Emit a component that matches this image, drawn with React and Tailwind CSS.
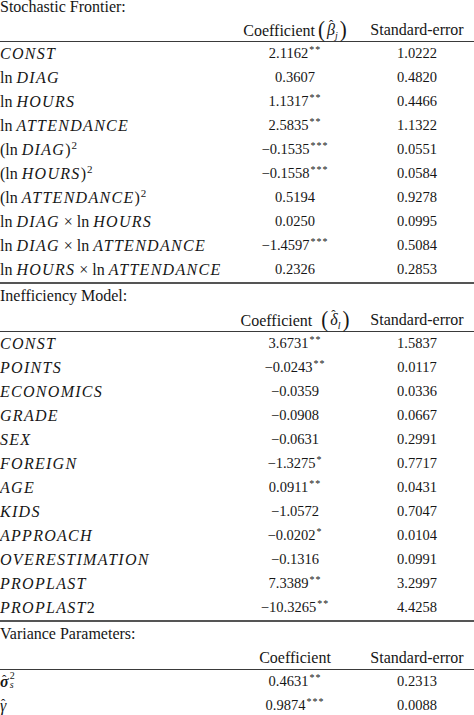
import React from "react";

const serif = { fontFamily: '"Liberation Serif", "Times New Roman", serif' };

// math italic caps, spaced like TeX
const M = ({ children }) => (
  <i className="tracking-[0.08em]">{children}</i>
);

const Hat = ({ children, pos }) => (
  <span className="relative inline-block leading-none">
    {children}
    <span className={`absolute ${pos} text-[13px] leading-none not-italic`}>ˆ</span>
  </span>
);

const Stars = ({ n }) =>
  n ? (
    <span className="relative -top-[5px] text-[10px] tracking-[0.1em] ml-[1px]">
      {"*".repeat(n)}
    </span>
  ) : null;

const Sq = () => <span className="relative -top-[6px] text-[11px] ml-[1px]">2</span>;

const Row = ({ label, coef, stars, se }) => (
  <div className="grid grid-cols-[230px_130px_114px] h-6 items-center">
    <div className="whitespace-nowrap">{label}</div>
    <div className="text-center whitespace-nowrap text-[14.5px]">
      {coef}
      <Stars n={stars} />
    </div>
    <div className="text-center text-[14.5px]">{se}</div>
  </div>
);

const Header = ({ sym }) => (
  <div className="grid grid-cols-[230px_130px_114px] h-6 items-center border-b border-[#3a3a3a]">
    <div />
    <div className="text-center whitespace-nowrap">
      Coefficient{sym}
    </div>
    <div className="text-center">Standard-error</div>
  </div>
);

const Paren = ({ children }) => (
  <span className="inline-flex items-center ml-[3px] h-6">
    <span className="text-[21px] leading-none scale-y-110 inline-block -mt-[2px]">(</span>
    <span className="mx-[2px]">{children}</span>
    <span className="text-[21px] leading-none scale-y-110 inline-block -mt-[2px]">)</span>
  </span>
);

const frontier = [
  [<M>CONST</M>, "2.1162", 2, "1.0222"],
  [<>ln <M>DIAG</M></>, "0.3607", 0, "0.4820"],
  [<>ln <M>HOURS</M></>, "1.1317", 2, "0.4466"],
  [<>ln <M>ATTENDANCE</M></>, "2.5835", 2, "1.1322"],
  [<>(ln <M>DIAG</M>)<Sq /></>, "−0.1535", 3, "0.0551"],
  [<>(ln <M>HOURS</M>)<Sq /></>, "−0.1558", 3, "0.0584"],
  [<>(ln <M>ATTENDANCE</M>)<Sq /></>, "0.5194", 0, "0.9278"],
  [<>ln <M>DIAG</M> × ln <M>HOURS</M></>, "0.0250", 0, "0.0995"],
  [<>ln <M>DIAG</M> × ln <M>ATTENDANCE</M></>, "−1.4597", 3, "0.5084"],
  [<>ln <M>HOURS</M> × ln <M>ATTENDANCE</M></>, "0.2326", 0, "0.2853"],
];

const inefficiency = [
  [<M>CONST</M>, "3.6731", 2, "1.5837"],
  [<M>POINTS</M>, "−0.0243", 2, "0.0117"],
  [<M>ECONOMICS</M>, "−0.0359", 0, "0.0336"],
  [<M>GRADE</M>, "−0.0908", 0, "0.0667"],
  [<M>SEX</M>, "−0.0631", 0, "0.2991"],
  [<M>FOREIGN</M>, "−1.3275", 1, "0.7717"],
  [<M>AGE</M>, "0.0911", 2, "0.0431"],
  [<M>KIDS</M>, "−1.0572", 0, "0.7047"],
  [<M>APPROACH</M>, "−0.0202", 1, "0.0104"],
  [<M>OVERESTIMATION</M>, "−0.1316", 0, "0.0991"],
  [<M>PROPLAST</M>, "7.3389", 2, "3.2997"],
  [<><M>PROPLAST</M>2</>, "−10.3265", 2, "4.4258"],
];

const variance = [
  [
    <span className="inline-flex items-center">
      <Hat pos="top-[-1px] left-[2px]">
        <i className="font-bold">σ</i>
      </Hat>
      <span className="inline-flex flex-col text-[10px] leading-[9px] ml-[1px] -mt-[4px]">
        <span>2</span>
        <i>s</i>
      </span>
    </span>,
    "0.4631",
    2,
    "0.2313",
  ],
  [
    <Hat pos="top-[-1px] left-[1px]">
      <i>γ</i>
    </Hat>,
    "0.9874",
    3,
    "0.0088",
  ],
];

export default function App() {
  return (
    <div className="w-[474px] h-[715px] overflow-hidden bg-white text-[#161616] text-[16px]" style={serif}>
      {/* Stochastic frontier */}
      <div className="h-[18px] leading-[14px]">Stochastic Frontier:</div>
      <Header
        sym={
          <Paren>
            <Hat pos="top-[-4px] left-[2px]">
              <i>β</i>
            </Hat>
            <i className="text-[10px] relative top-[4px]">j</i>
          </Paren>
        }
      />
      {frontier.map((r, i) => (
        <Row key={i} label={r[0]} coef={r[1]} stars={r[2]} se={r[3]} />
      ))}

      {/* Inefficiency model */}
      <div className="border-t-2 border-[#555]" />
      <div className="h-6 flex items-center">Inefficiency Model:</div>
      <Header
        sym={
          <span className="ml-[6px]">
            <Paren>
              <Hat pos="top-[-4px] left-[1px]">
                <i>δ</i>
              </Hat>
              <i className="text-[10px] relative top-[4px]">l</i>
            </Paren>
          </span>
        }
      />
      {inefficiency.map((r, i) => (
        <Row key={i} label={r[0]} coef={r[1]} stars={r[2]} se={r[3]} />
      ))}

      {/* Variance parameters */}
      <div className="border-t-2 border-[#555]" />
      <div className="h-6 flex items-center">Variance Parameters:</div>
      <Header sym={null} />
      {variance.map((r, i) => (
        <Row key={i} label={r[0]} coef={r[1]} stars={r[2]} se={r[3]} />
      ))}
    </div>
  );
}
